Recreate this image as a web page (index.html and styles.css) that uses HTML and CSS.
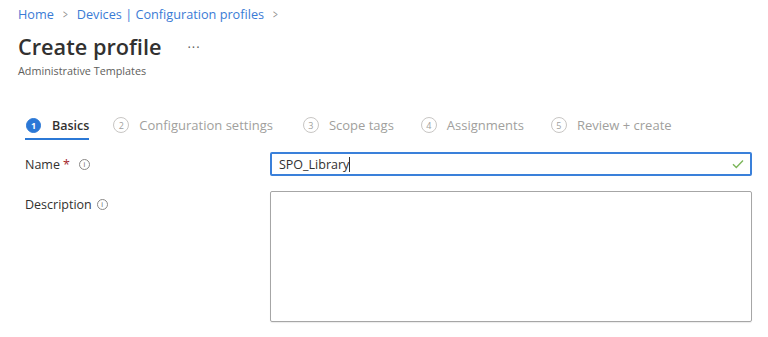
FILE: index.html
```html
<!DOCTYPE html>
<html lang="en">
<head>
<meta charset="utf-8">
<title>Create profile</title>
<link rel="stylesheet" href="styles.css">
</head>
<body>
<div class="page">
  <nav class="breadcrumb">
    <a class="crumb" href="#">Home</a>
    <span class="chev">&gt;</span>
    <a class="crumb" href="#">Devices | Configuration profiles</a>
    <span class="chev">&gt;</span>
  </nav>
  <div class="title-row">
    <h1 class="title">Create profile</h1>
    <span class="more">&middot;&middot;&middot;</span>
  </div>
  <div class="subtitle">Administrative Templates</div>

  <div class="steps">
    <div class="step active"><span class="num">1</span><span class="label">Basics</span></div>
    <div class="step wide"><span class="num">2</span><span class="label">Configuration settings</span></div>
    <div class="step"><span class="num">3</span><span class="label">Scope tags</span></div>
    <div class="step"><span class="num">4</span><span class="label">Assignments</span></div>
    <div class="step"><span class="num">5</span><span class="label">Review + create</span></div>
  </div>

  <div class="form">
    <div class="field-label">Name <span class="req">*</span> <span class="info">i</span></div>
    <div class="input">
      <span class="value">SPO_Library</span><span class="caret"></span>
      <svg class="check" width="12" height="10" viewBox="0 0 12 10"><path d="M1 5.2 L4.3 8.4 L11 1.6" fill="none" stroke="#7cb65a" stroke-width="1.4"/></svg>
    </div>
    <div class="field-label desc">Description <span class="info">i</span></div>
    <div class="textarea"></div>
  </div>
</div>
</body>
</html>
```

FILE: styles.css
```css
html, body {
  margin: 0;
  padding: 0;
  background: #ffffff;
}
body {
  font-family: "Open Sans", "Noto Sans", sans-serif;
  color: #323130;
  width: 768px;
  height: 337px;
  overflow: hidden;
}
.page {
  padding-left: 18px;
}
.breadcrumb {
  display: flex;
  align-items: center;
  height: 20px;
  padding-top: 4px;
  font-size: 12.7px;
  gap: 8px;
}
.crumb {
  color: #3a7bd5;
  text-decoration: none;
}
.chev {
  color: #8a8886;
  font-size: 12px;
  transform: scaleX(0.7);
  display: inline-block;
}
.title-row {
  display: flex;
  align-items: center;
  margin-top: 9px;
  height: 28px;
}
.title {
  margin: 0;
  font-size: 21.7px;
  font-weight: 600;
  line-height: 28px;
  color: #323130;
}
.more {
  margin-left: 26px;
  font-size: 13px;
  color: #605e5c;
  letter-spacing: 1px;
}
.subtitle {
  margin-top: 2px;
  font-size: 10.8px;
  line-height: 16px;
  color: #605e5c;
}
.steps {
  display: flex;
  margin-top: 36px;
  padding-left: 7px;
  gap: 26px;
}
.step {
  display: flex;
  align-items: center;
  height: 20px;
  padding-bottom: 3px;
  border-bottom: 2px solid transparent;
  font-size: 13px;
  color: #a19f9d;
}
.step.active {
  border-bottom-color: #2b78d6;
  color: #323130;
  font-weight: 600;
  font-size: 12.5px;
  margin-right: -3px;
}
.step.wide {
  margin-right: 3px;
}
.step .num {
  box-sizing: border-box;
  width: 16px;
  height: 16px;
  border-radius: 50%;
  border: 1px solid #c8c6c4;
  font-size: 9px;
  font-weight: 400;
  display: flex;
  align-items: center;
  justify-content: center;
  margin-right: 10px;
  margin-left: 1px;
  color: #a19f9d;
}
.step.active .num {
  width: 15px;
  height: 15px;
  background: #2b78d6;
  border-color: #2b78d6;
  color: #ffffff;
  font-weight: 700;
  margin-right: 11px;
}
.form {
  display: grid;
  grid-template-columns: 245px 482px;
  grid-template-rows: 24px 131px;
  row-gap: 15px;
  margin-top: 12px;
  padding-left: 7px;
}
.field-label {
  display: flex;
  align-items: center;
  height: 24px;
  font-size: 12.5px;
  color: #323130;
}
.field-label.desc {
  height: 20px;
  padding-top: 3px;
}
.req {
  color: #a4262c;
  margin-left: 3px;
  margin-right: 4px;
}
.info {
  box-sizing: border-box;
  display: inline-flex;
  align-items: center;
  justify-content: center;
  width: 11px;
  height: 11px;
  border: 1px solid #8a8886;
  border-radius: 50%;
  font-size: 7px;
  color: #605e5c;
  margin-left: 5px;
}
.input {
  box-sizing: border-box;
  height: 24px;
  border: 2px solid #3a80da;
  border-radius: 2px;
  display: flex;
  align-items: center;
  padding-left: 7px;
  padding-right: 6px;
  font-size: 12.5px;
  color: #323130;
}
.caret {
  width: 1px;
  height: 15px;
  background: #323130;
}
.check {
  margin-left: auto;
}
.textarea {
  box-sizing: border-box;
  height: 131px;
  border: 1px solid #a6a6a6;
  border-radius: 2px;
  box-shadow: 0 1px 1px rgba(0,0,0,0.08);
}
```
